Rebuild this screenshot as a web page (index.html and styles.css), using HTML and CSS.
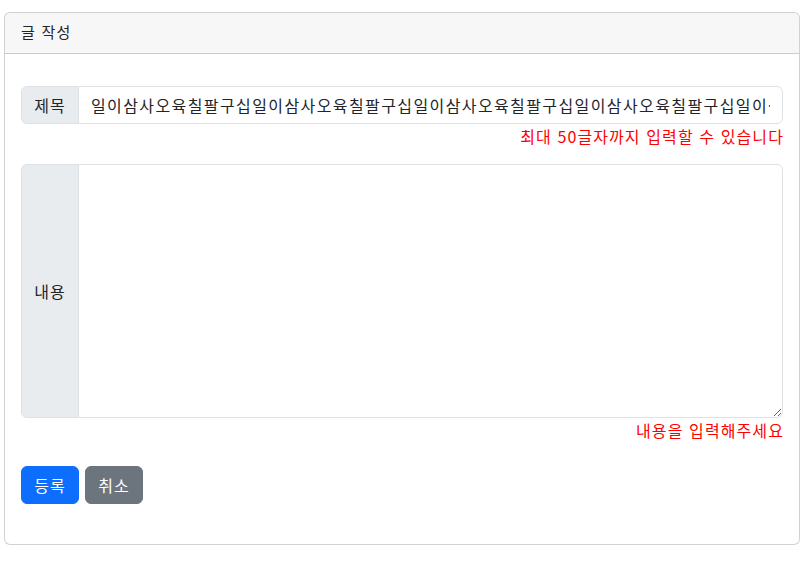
FILE: index.html
```html
<!DOCTYPE html>
<html lang="ko">
<head>
<meta charset="utf-8">
<title>글 작성</title>
<link rel="stylesheet" href="styles.css">
</head>
<body>
<div class="card">
  <div class="card-header">글 작성</div>
  <div class="card-body">
    <div class="input-group title-group">
      <span class="input-label">제목</span>
      <input class="input-control" type="text" value="일이삼사오육칠팔구십일이삼사오육칠팔구십일이삼사오육칠팔구십일이삼사오육칠팔구십일이삼사오육칠팔구십">
    </div>
    <div class="error-text">최대 50글자까지 입력할 수 있습니다</div>
    <div class="input-group content-group">
      <span class="input-label">내용</span>
      <textarea class="input-control textarea"></textarea>
    </div>
    <div class="error-text">내용을 입력해주세요</div>
    <div class="buttons">
      <button class="btn btn-primary" type="button">등록</button>
      <button class="btn btn-secondary" type="button">취소</button>
    </div>
  </div>
</div>
</body>
</html>
```
FILE: styles.css
```css
* { box-sizing: border-box; }
body {
  margin: 0;
  font-family: "Noto Sans CJK KR", "Noto Sans", sans-serif;
  font-size: 16px;
  line-height: 1.5;
  color: #212529;
  background: #fff;
  letter-spacing: 1.3px;
}
.card {
  margin: 12px 6px 0 4px;
  border: 1px solid rgba(0,0,0,0.175);
  border-radius: 6px;
  background: #fff;
}
.card-header {
  padding: 8px 16px;
  background: rgba(0,0,0,0.03);
  border-bottom: 1px solid rgba(0,0,0,0.175);
  border-radius: 5px 5px 0 0;
  height: 41px;
  font-size: 15px;
  letter-spacing: 1.2px;
}
.card-body {
  padding: 32px 16px 40px;
}
.input-group {
  display: flex;
  align-items: stretch;
}
.content-group { margin-top: 16px; }
.input-label {
  display: flex;
  align-items: center;
  justify-content: center;
  padding: 6px 0;
  width: 58px;
  background: #e9ecef;
  border: 1px solid #dee2e6;
  border-radius: 6px 0 0 6px;
  white-space: nowrap;
  font-size: 16px;
  letter-spacing: 1px;
}
.input-control {
  flex: 1;
  min-width: 0;
  margin-left: -1px;
  padding: 6px 12px;
  font: inherit;
  letter-spacing: 1.4px;
  color: #212529;
  border: 1px solid #dee2e6;
  border-radius: 0 6px 6px 0;
  background: #fff;
  height: 38px;
  outline: none;
}
.textarea {
  height: 254px;
  resize: vertical;
}
.error-text {
  color: #ff0000;
  text-align: right;
  height: 24px;
  font-size: 16px;
  letter-spacing: 1.1px;
  margin-right: -1px;
}
.buttons {
  margin-top: 24px;
  display: flex;
  gap: 6px;
}
.btn {
  font: inherit;
  font-size: 16px;
  letter-spacing: 1px;
  height: 38px;
  width: 58px;
  padding: 6px 0;
  border: 1px solid transparent;
  border-radius: 6px;
  color: #fff;
  cursor: pointer;
}
.btn-primary { background: #0d6efd; border-color: #0d6efd; }
.btn-secondary { background: #6c757d; border-color: #6c757d; }
```
